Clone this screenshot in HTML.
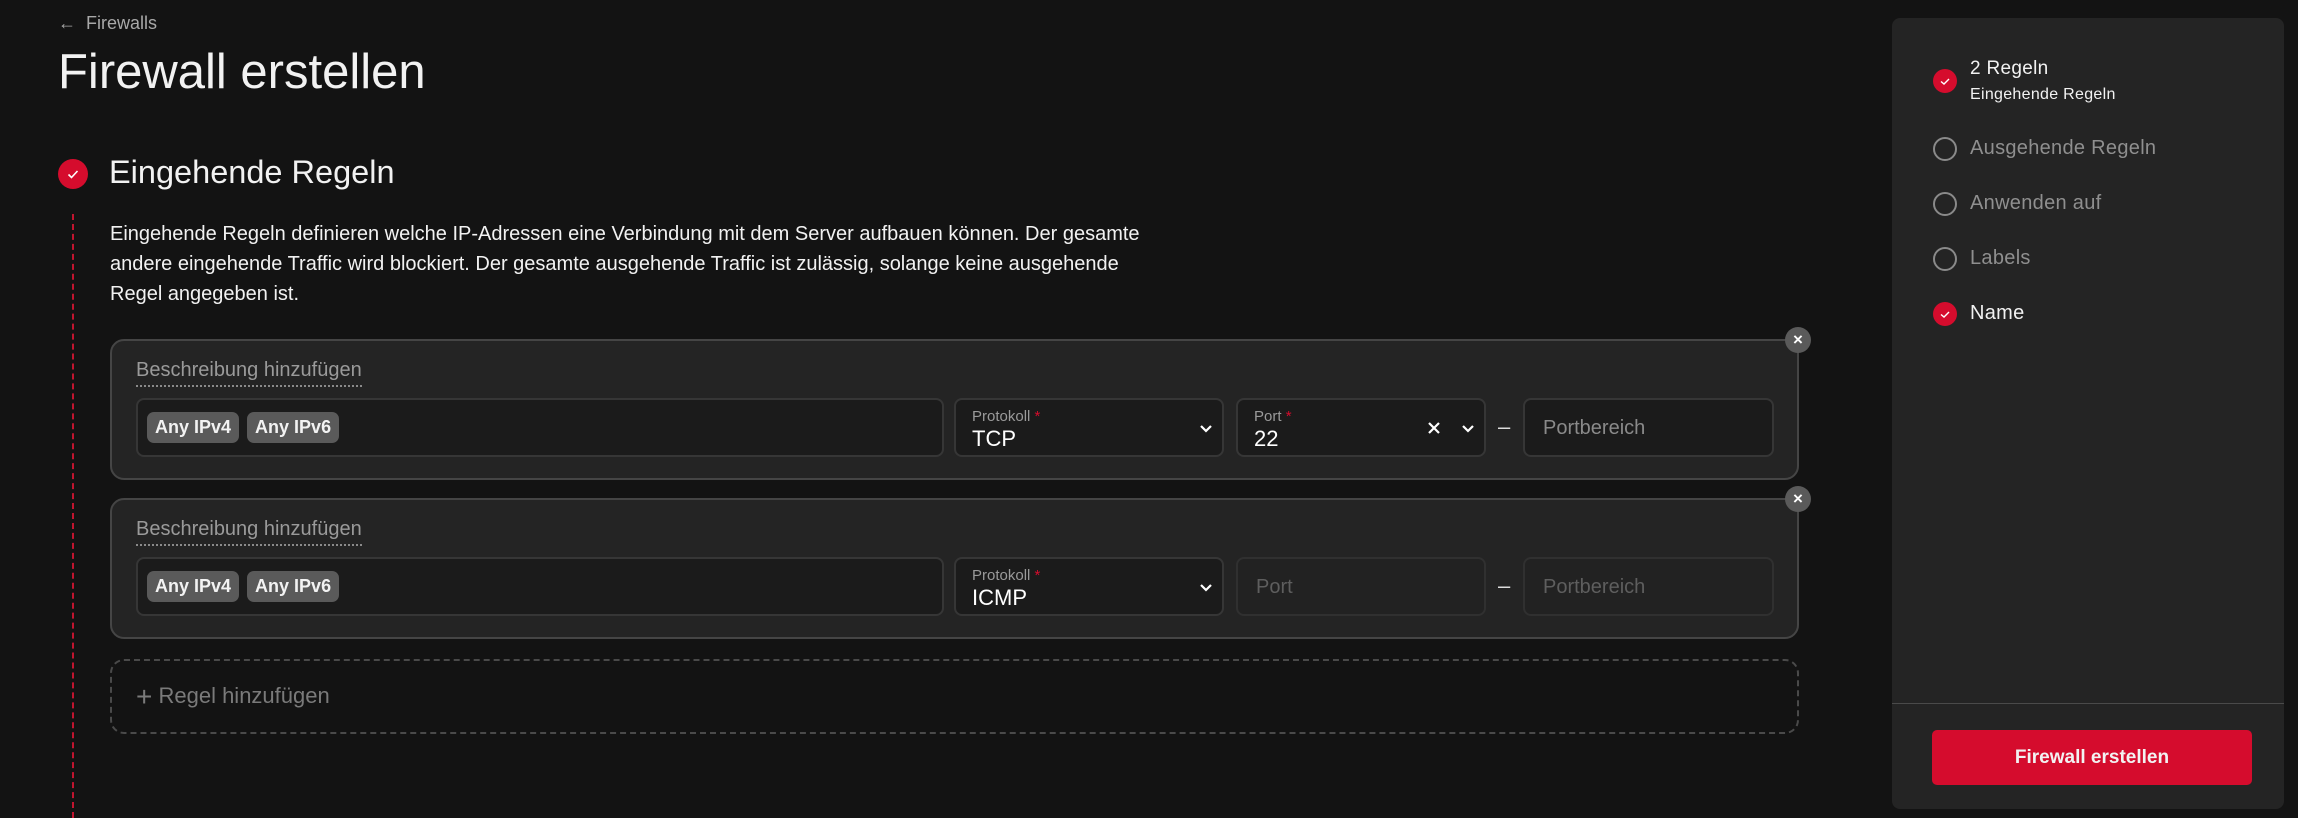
<!DOCTYPE html>
<html><head><meta charset="utf-8"><style>
*{box-sizing:border-box;margin:0;padding:0}
body{width:2298px;height:818px;background:#131313;font-family:"Liberation Sans",sans-serif;color:#fff;position:relative;overflow:hidden}
.a{position:absolute}
.card{position:absolute;left:110px;width:1689px;height:141px;background:#242424;border:2px solid #454545;border-radius:14px}
.desc{position:absolute;left:24px;top:18px;font-size:20px;color:#9a9a9a;border-bottom:2px dotted #8a8a8a;padding-bottom:3px}
.inp{position:absolute;top:57px;height:59px;background:#1b1b1b;border:2px solid #363636;border-radius:8px}
.chips{position:absolute;left:9px;top:12px;display:flex;gap:8px}
.chip{height:31px;background:#5a5a5a;border-radius:7px;font-size:18px;font-weight:bold;line-height:31px;padding:0 8px;color:#f2f2f2}
.lbl{position:absolute;left:16px;top:8px;font-size:15px;color:#9a9a9a}
.lbl b{color:#d50c2d;font-weight:normal}
.val{position:absolute;left:16px;top:26px;font-size:22px;color:#fff}
.ph{position:absolute;left:18px;top:17px;font-size:20px;color:#8a8a8a}
.chev{position:absolute;top:20px;width:16px;height:16px}
.x{position:absolute;right:-14px;top:-14px;width:26px;height:26px;border-radius:50%;background:#5a5a5a;color:#fff;font-size:17px;line-height:25px;text-align:center;font-weight:bold}
.dash{position:absolute;top:73px;font-size:22px;color:#ddd}
.step{position:absolute;left:1933px;width:24px;height:24px;border-radius:50%}
.on{background:#d50c2d}
.off{border:2.5px solid #8a8a8a}
.st{position:absolute;left:1970px;font-size:20px;color:#8f8f8f;letter-spacing:.3px}
</style></head><body>
<div class="a" style="left:58px;top:13px;font-size:18px;color:#a8a8a8">&#8592;&nbsp; Firewalls</div>
<div class="a" style="left:58px;top:44px;font-size:49px;color:#f2f2f2">Firewall erstellen</div>
<div class="a" style="left:58px;top:159px;width:30px;height:30px;border-radius:50%;background:#d50c2d"><svg width="30" height="30"><path d="M10.5 15.5l3 3 6-6.5" stroke="#fff" stroke-width="1.6" fill="none"/></svg></div>
<div class="a" style="left:109px;top:154px;font-size:32.5px;color:#f2f2f2">Eingehende Regeln</div>
<div class="a" style="left:72px;top:214px;width:0;height:604px;border-left:2px dashed #c0152f"></div>
<div class="a" style="left:110px;top:219px;width:1045px;font-size:20px;line-height:30px;color:#f2f2f2">Eingehende Regeln definieren welche IP-Adressen eine Verbindung mit dem Server aufbauen können. Der gesamte andere eingehende Traffic wird blockiert. Der gesamte ausgehende Traffic ist zulässig, solange keine ausgehende Regel angegeben ist.</div>

<div class="card" style="top:339px">
 <div class="x">×</div>
 <div class="desc">Beschreibung hinzufügen</div>
 <div class="inp" style="left:24px;width:808px"><div class="chips"><div class="chip">Any IPv4</div><div class="chip">Any IPv6</div></div></div>
 <div class="inp" style="left:842px;width:270px"><div class="lbl">Protokoll <b>*</b></div><div class="val">TCP</div><svg class="chev" style="right:8px" viewBox="0 0 16 16"><path d="M3 6l5 5 5-5" stroke="#fff" stroke-width="2.2" fill="none"/></svg></div>
 <div class="inp" style="left:1124px;width:250px"><div class="lbl">Port <b>*</b></div><div class="val">22</div><svg class="chev" style="right:42px" viewBox="0 0 16 16"><path d="M3 3l10 10M13 3L3 13" stroke="#fff" stroke-width="2.2"/></svg><svg class="chev" style="right:8px" viewBox="0 0 16 16"><path d="M3 6l5 5 5-5" stroke="#fff" stroke-width="2.2" fill="none"/></svg></div>
 <div class="dash" style="left:1386px">–</div>
 <div class="inp" style="left:1411px;width:251px"><div class="ph">Portbereich</div></div>
</div>

<div class="card" style="top:498px">
 <div class="x">×</div>
 <div class="desc">Beschreibung hinzufügen</div>
 <div class="inp" style="left:24px;width:808px"><div class="chips"><div class="chip">Any IPv4</div><div class="chip">Any IPv6</div></div></div>
 <div class="inp" style="left:842px;width:270px"><div class="lbl">Protokoll <b>*</b></div><div class="val">ICMP</div><svg class="chev" style="right:8px" viewBox="0 0 16 16"><path d="M3 6l5 5 5-5" stroke="#fff" stroke-width="2.2" fill="none"/></svg></div>
 <div class="inp" style="left:1124px;width:250px;background:#222;border-color:#303030"><div class="ph" style="color:#5e5e5e">Port</div></div>
 <div class="dash" style="left:1386px">–</div>
 <div class="inp" style="left:1411px;width:251px;background:#222;border-color:#303030"><div class="ph" style="color:#5e5e5e">Portbereich</div></div>
</div>

<div class="a" style="left:110px;top:659px;width:1689px;height:75px;border:2px dashed #4a4a4a;border-radius:14px">
 <div class="a" style="left:24px;top:20px;font-size:22px;color:#7a7a7a"><span style="font-size:28px;vertical-align:-3px">+</span> Regel hinzufügen</div>
</div>

<div class="a" style="left:1892px;top:18px;width:392px;height:791px;background:#242424;border-radius:8px"></div>
<div class="a" style="left:1892px;top:703px;width:392px;height:1px;background:#4a4a4a"></div>
<div class="step on" style="top:69px"><svg width="24" height="24"><path d="M8 12.5l3 2.5 5-5" stroke="#fff" stroke-width="1.4" fill="none"/></svg></div>
<div class="st" style="top:58px;color:#f2f2f2;font-size:19px">2 Regeln</div>
<div class="st" style="top:86px;color:#f2f2f2;font-size:16px">Eingehende Regeln</div>
<div class="step off" style="top:137px"></div><div class="st" style="top:137px">Ausgehende Regeln</div>
<div class="step off" style="top:192px"></div><div class="st" style="top:192px">Anwenden auf</div>
<div class="step off" style="top:247px"></div><div class="st" style="top:247px">Labels</div>
<div class="step on" style="top:302px"><svg width="24" height="24"><path d="M8 12.5l3 2.5 5-5" stroke="#fff" stroke-width="1.4" fill="none"/></svg></div>
<div class="st" style="top:302px;color:#f2f2f2">Name</div>
<div class="a" style="left:1932px;top:730px;width:320px;height:55px;background:#d50c2d;border-radius:5px;text-align:center;line-height:55px;font-size:19px;font-weight:bold;color:#f2f2f2">Firewall erstellen</div>
</body></html>
